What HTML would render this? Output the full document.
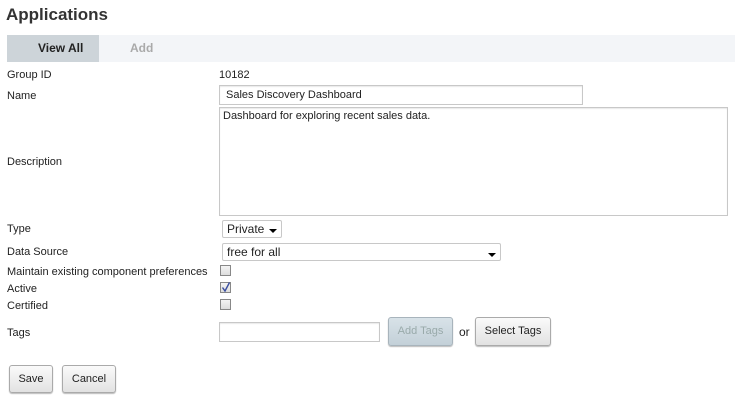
<!DOCTYPE html>
<html><head><meta charset="utf-8"><style>
body{margin:0;width:735px;height:401px;background:#fff;font-family:"Liberation Sans",Arial,sans-serif;font-size:11px;color:#222;position:relative;overflow:hidden}
.a{position:absolute;white-space:nowrap}
.inp{position:absolute;border:1px solid #c8c8c8;background:#fff;box-sizing:border-box;box-shadow:inset 0 1px 1px #e8e8e8}
.sel{position:absolute;border:1px solid #c8c8c8;border-radius:2px;background:#fff;box-sizing:border-box;font-size:12px;padding:1px 0 0 4px}
.tri{position:absolute;width:0;height:0;border-left:4px solid transparent;border-right:4px solid transparent;border-top:4px solid #000}
.cb{position:absolute;width:11px;height:11px;border:1px solid #888;background:linear-gradient(#f4f4f4,#ddd);box-sizing:border-box}
.btn{position:absolute;box-sizing:border-box;border:1px solid #aaa;border-radius:3px;background:linear-gradient(#fafafa,#e2e2e2);text-align:center;font-size:11px;box-shadow:0 1px 1px #bbb}
</style></head><body>
<div class="a" style="left:6px;top:5px;font-size:17px;font-weight:bold;color:#333">Applications</div>
<div class="a" style="left:7px;top:35px;width:728px;height:27px;background:#f3f5f8"></div>
<div class="a" style="left:7px;top:35px;width:92px;height:27px;background:#cdd4d9"></div>
<div class="a" style="left:38px;top:41px;font-size:12px;font-weight:bold;color:#222">View All</div>
<div class="a" style="left:130px;top:41px;font-size:12px;font-weight:bold;color:#aaa">Add</div>

<div class="a" style="left:7px;top:69px">Group ID</div>
<div class="a" style="left:219px;top:69px">10182</div>
<div class="a" style="left:7px;top:90px">Name</div>
<div class="inp" style="left:219px;top:85px;width:364px;height:20px;padding:3px 6px;font-size:11px">Sales Discovery Dashboard</div>
<div class="a" style="left:7px;top:156px">Description</div>
<div class="inp" style="left:219px;top:107px;width:509px;height:109px;padding:2px 3px;font-size:11px">Dashboard for exploring recent sales data.</div>
<div class="a" style="left:7px;top:223px">Type</div>
<div class="sel" style="left:222px;top:220px;width:60px;height:18px">Private</div>
<div class="tri" style="left:269px;top:229px"></div>
<div class="a" style="left:7px;top:246px">Data Source</div>
<div class="sel" style="left:222px;top:243px;width:279px;height:18px">free for all</div>
<div class="tri" style="left:488px;top:253px"></div>
<div class="a" style="left:7px;top:266px">Maintain existing component preferences</div>
<div class="cb" style="left:220px;top:265px"></div>
<div class="a" style="left:7px;top:283px">Active</div>
<div class="cb" style="left:220px;top:282px"></div>
<svg class="a" style="left:220px;top:281px" width="12" height="12"><path d="M2.5 6.5 L5 10 L9.5 1.5" stroke="#3a4ea0" stroke-width="1.4" fill="none"/></svg>
<div class="a" style="left:7px;top:300px">Certified</div>
<div class="cb" style="left:220px;top:299px"></div>
<div class="a" style="left:7px;top:327px">Tags</div>
<div class="inp" style="left:219px;top:322px;width:161px;height:20px"></div>
<div class="btn" style="left:388px;top:317px;width:65px;height:29px;line-height:27px;color:#9aa;background:linear-gradient(#d8e2e8,#c3d0d8);border-color:#a8b4bc">Add Tags</div>
<div class="a" style="left:459px;top:325px;font-size:12px">or</div>
<div class="btn" style="left:475px;top:317px;width:76px;height:29px;line-height:27px">Select Tags</div>
<div class="btn" style="left:9px;top:365px;width:44px;height:28px;line-height:26px">Save</div>
<div class="btn" style="left:62px;top:365px;width:54px;height:28px;line-height:26px">Cancel</div>
</body></html>
